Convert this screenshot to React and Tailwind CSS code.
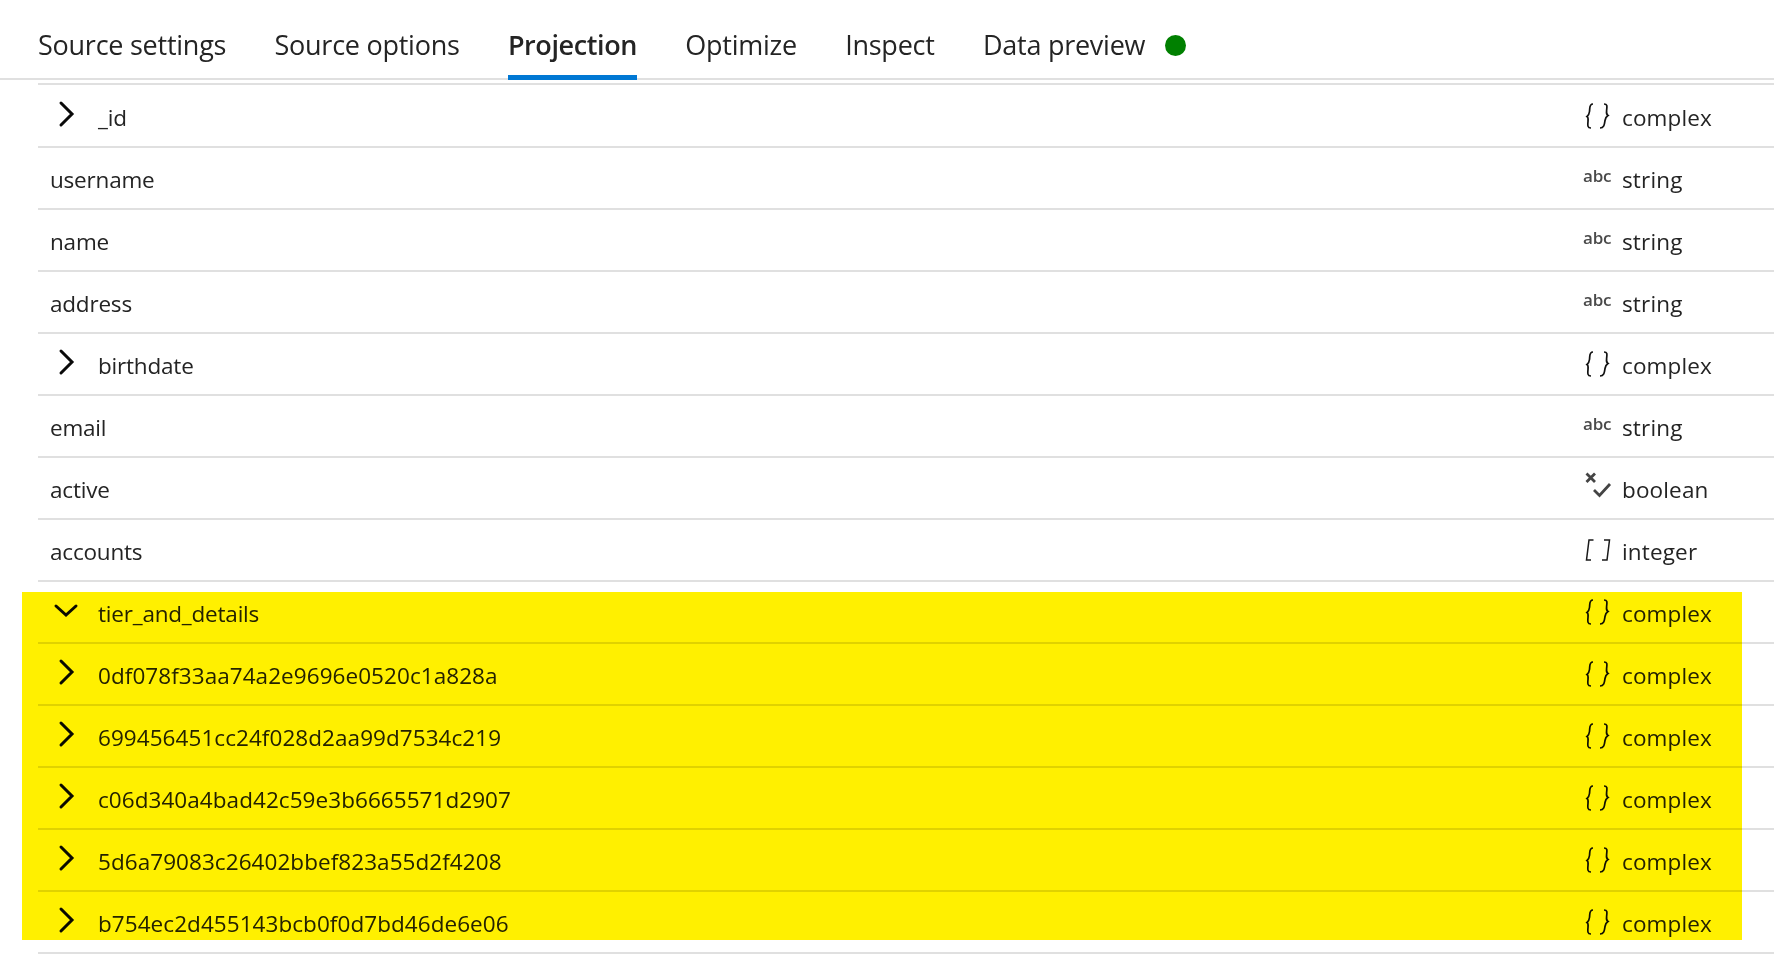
const TABS = [
  { label: 'Source settings' },
  { label: 'Source options' },
  { label: 'Projection', active: true },
  { label: 'Optimize' },
  { label: 'Inspect' },
  { label: 'Data preview', dot: true },
]

const ROWS = [
  { name: '_id', type: 'complex', expand: 'right' },
  { name: 'username', type: 'string' },
  { name: 'name', type: 'string' },
  { name: 'address', type: 'string' },
  { name: 'birthdate', type: 'complex', expand: 'right' },
  { name: 'email', type: 'string' },
  { name: 'active', type: 'boolean' },
  { name: 'accounts', type: 'integer' },
  { name: 'tier_and_details', type: 'complex', expand: 'down' },
  { name: '0df078f33aa74a2e9696e0520c1a828a', type: 'complex', expand: 'right', hash: true },
  { name: '699456451cc24f028d2aa99d7534c219', type: 'complex', expand: 'right', hash: true },
  { name: 'c06d340a4bad42c59e3b6665571d2907', type: 'complex', expand: 'right', hash: true },
  { name: '5d6a79083c26402bbef823a55d2f4208', type: 'complex', expand: 'right', hash: true },
  { name: 'b754ec2d455143bcb0f0d7bd46de6e06', type: 'complex', expand: 'right', hash: true },
]

function Chevron({ down }) {
  return (
    <svg width="28" height="28" viewBox="0 0 28 28" className="-mt-[5px] shrink-0" fill="none" stroke="#0a0a0a" strokeWidth="3" strokeLinecap="round">
      <path d={down ? 'M4 10l10 9 10-9' : 'M9 3l11 11L9 25'} />
    </svg>
  )
}

function TypeIcon({ type }) {
  if (type === 'string') {
    return <span className="text-[17px] leading-none font-semibold text-[#4a4a4a] -mt-[5px] -ml-[1px]">abc</span>
  }
  if (type === 'complex') {
    return (
      <svg width="28" height="28" viewBox="0 0 28 28" className="-mt-[1px]" fill="none" stroke="#111" strokeWidth="1.700">
        <path d="M9 2C5 2 6 6 5.500 9.500 5.200 12 4.500 13.500 3 14.500c1.500 1 1.300 2.500 1 5-.4 3.500-.8 6.500 3 6.500" />
        <path d="M20 2c3.800 0 3 3 2.600 6.500-.3 2.500-.2 4 1.400 5-1.800 1-2.600 2.500-3 5-.5 3.500-.8 7.500-5 7.500" />
      </svg>
    )
  }
  if (type === 'boolean') {
    return (
      <svg width="28" height="28" viewBox="0 0 28 28" className="-mt-[5px]" fill="none" stroke="#444" strokeWidth="2.800">
        <path d="M2.500 1.500l8.500 8.500M11 1.500L2.500 10" />
        <path d="M10 18l5.500 5.500L26 12" />
      </svg>
    )
  }
  return (
    <svg width="28" height="28" viewBox="0 0 28 28" className="-mt-[1px]" fill="none" stroke="#1a1a1a" strokeWidth="1.500">
      <path d="M9.500 4H5L2.500 24H7" />
      <path d="M20 4h5.500L23 24h-5" />
    </svg>
  )
}

function Row({ row }) {
  return (
    <div className="flex items-center h-[62px] border-b-2 border-[#e0e0e0]">
      {row.expand ? (
        <div className="flex items-center flex-1">
          <span className="w-[60px] pl-[14px] flex">
            <Chevron down={row.expand === 'down'} />
          </span>
          <span className={`pt-[3px] ${row.hash ? 'tracking-[0.06px]' : ''}`}>{row.name}</span>
        </div>
      ) : (
        <span className="flex-1 pl-3 pt-[3px]">{row.name}</span>
      )}
      <div className="flex items-center w-[190px]">
        <span className="w-[38px] flex justify-start">
          <TypeIcon type={row.type} />
        </span>
        <span className="pt-[3px] tracking-[0.15px]">{row.type}</span>
      </div>
    </div>
  )
}

export default function App() {
  return (
    <div className="relative h-[958px] overflow-hidden bg-white text-[#242424] font-['Open_Sans',sans-serif]">
      {/* Onglets */}
      <div className="flex items-center gap-[48.300px] h-[80px] pl-[38px] border-b-2 border-[#e0e0e0] text-[27px] tracking-[-0.25px]">
        {TABS.map((t) => (
          <div key={t.label} className="relative flex items-center gap-[20px] h-full pt-[12px]">
            <span className={t.active ? 'font-semibold tracking-[-0.4px]' : ''}>{t.label}</span>
            {t.dot && <span className="w-[21px] h-[21px] rounded-full bg-[#008000]" />}
            {t.active && <span className="absolute left-0 right-0 bottom-[-2px] h-[5px] bg-[#0078d4]" />}
          </div>
        ))}
      </div>

      {/* Lignes */}
      <div className="ml-[38px] mt-[3px] pt-[1px] border-t-2 border-[#e0e0e0] text-[22.5px] tracking-[-0.2px]">
        {ROWS.map((r) => (
          <Row key={r.name} row={r} />
        ))}
      </div>

      {/* Surlignage jaune */}
      <div className="absolute left-[22px] top-[592px] w-[1720px] h-[348px] bg-[#fff000] mix-blend-multiply" />
    </div>
  )
}
